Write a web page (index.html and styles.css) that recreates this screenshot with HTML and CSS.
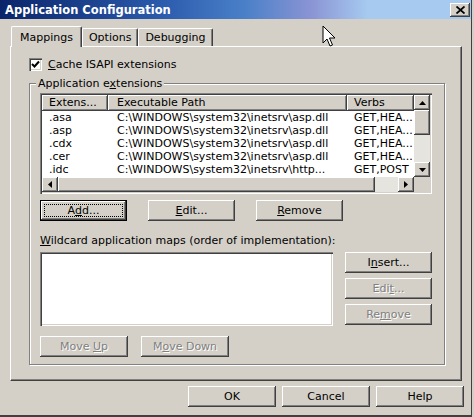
FILE: index.html
```html
<!DOCTYPE html>
<html>
<head>
<meta charset="utf-8">
<title>Application Configuration</title>
<link rel="stylesheet" href="styles.css">
</head>
<body>
<div class="window">
  <div class="titlebar">
    <span class="title">Application Configuration</span>
    <span class="close"><svg width="9" height="8" viewBox="0 0 9 8"><path d="M0.5 0.5 L8.5 7.5 M8.5 0.5 L0.5 7.5" stroke="#000" stroke-width="1.8" fill="none"/></svg></span>
  </div>
  <div class="main">
    <div class="tabs">
      <div class="tab active">Mappings</div>
      <div class="tab">Options</div>
      <div class="tab">Debugging</div>
    </div>
    <div class="panel">
      <div class="check">
        <span class="box"><svg width="9" height="9" viewBox="0 0 9 9"><path d="M1 4 L3.5 6.5 L8 1.5" stroke="#000" stroke-width="2" fill="none"/></svg></span>
        <span><u>C</u>ache ISAPI extensions</span>
      </div>
      <fieldset class="group">
        <legend>Application e<u>x</u>tensions</legend>
        <div class="listview">
          <div class="lv-main">
            <div class="lv-head">
              <div class="hc c1">Extens...</div>
              <div class="hc c2">Executable Path</div>
              <div class="hc c3">Verbs</div>
            </div>
            <div class="lv-row"><div class="c1">.asa</div><div class="c2">C:\WINDOWS\system32\inetsrv\asp.dll</div><div class="c3">GET,HEA...</div></div>
            <div class="lv-row"><div class="c1">.asp</div><div class="c2">C:\WINDOWS\system32\inetsrv\asp.dll</div><div class="c3">GET,HEA...</div></div>
            <div class="lv-row"><div class="c1">.cdx</div><div class="c2">C:\WINDOWS\system32\inetsrv\asp.dll</div><div class="c3">GET,HEA...</div></div>
            <div class="lv-row"><div class="c1">.cer</div><div class="c2">C:\WINDOWS\system32\inetsrv\asp.dll</div><div class="c3">GET,HEA...</div></div>
            <div class="lv-row"><div class="c1">.idc</div><div class="c2">C:\WINDOWS\system32\inetsrv\http...</div><div class="c3">GET,POST</div></div>
          </div>
          <div class="vscroll">
            <div class="sbtn"><svg width="7" height="4" viewBox="0 0 7 4"><path d="M3.5 0 L7 4 L0 4 Z" fill="#000"/></svg></div>
            <div class="vthumb"></div>
            <div class="track"></div>
            <div class="sbtn"><svg width="7" height="4" viewBox="0 0 7 4"><path d="M0 0 L7 0 L3.5 4 Z" fill="#000"/></svg></div>
          </div>
          <div class="hscroll">
            <div class="sbtn"><svg width="4" height="7" viewBox="0 0 4 7"><path d="M4 0 L4 7 L0 3.5 Z" fill="#000"/></svg></div>
            <div class="hthumb"></div>
            <div class="track"></div>
            <div class="sbtn"><svg width="4" height="7" viewBox="0 0 4 7"><path d="M0 0 L4 3.5 L0 7 Z" fill="#000"/></svg></div>
          </div>
          <div class="corner"></div>
        </div>
        <div class="btnrow">
          <button class="btn default"><span>A<u>d</u>d...</span></button>
          <button class="btn"><span><u>E</u>dit...</span></button>
          <button class="btn"><span><u>R</u>emove</span></button>
        </div>
        <div class="label"><u>W</u>ildcard application maps (order of implementation):</div>
        <div class="wild">
          <div class="listbox"></div>
          <div class="col">
            <button class="btn"><span>I<u>n</u>sert...</span></button>
            <button class="btn dis"><span>Edi<u>t</u>...</span></button>
            <button class="btn dis"><span>Re<u>m</u>ove</span></button>
          </div>
        </div>
        <div class="moverow">
          <button class="btn dis wide"><span>Move <u>U</u>p</span></button>
          <button class="btn dis wide"><span>M<u>o</u>ve Down</span></button>
        </div>
      </fieldset>
    </div>
  </div>
  <div class="footer">
    <button class="btn wide">OK</button>
    <button class="btn wide">Cancel</button>
    <button class="btn wide">Help</button>
  </div>
  <svg class="cursor" width="14" height="22" viewBox="0 0 14 22"><path d="M1 1 L1 18 L5 14 L8 21 L10.5 20 L7.5 13 L13 13 Z" fill="#fff" stroke="#000" stroke-width="1" stroke-linejoin="miter"/></svg>
</div>
</body>
</html>
```

FILE: styles.css
```css
html, body {
  margin: 0;
  padding: 0;
  background: #d4d0c8;
}
body {
  font: 11px "DejaVu Sans", "Liberation Sans", sans-serif;
  color: #000;
}
.window {
  position: relative;
  width: 472px;
  height: 417px;
  box-sizing: border-box;
  border-right: 1px solid #404040;
  border-bottom: 2px solid #404040;
  background: #d4d0c8;
  overflow: hidden;
}
.titlebar {
  height: 19px;
  display: flex;
  align-items: center;
  justify-content: space-between;
  padding: 0 1px 0 5px;
  background: linear-gradient(to right, #0a246a 0%, #2c5cae 35%, #4a80c8 52%, #8a94d4 66%, #a6caf0 78%, #a6caf0 100%);
  color: #fff;
  font-weight: bold;
  font-size: 11.5px;
}
.close {
  width: 20px;
  height: 14px;
  box-sizing: border-box;
  display: flex;
  align-items: center;
  justify-content: center;
  background: #d4d0c8;
  box-shadow: inset -1px -1px #404040, inset 1px 1px #fff, inset -2px -2px #808080;
}
.main {
  padding: 7px 9px 0 10px;
}
.tabs {
  display: flex;
  align-items: flex-end;
  height: 20px;
  padding-left: 1px;
  position: relative;
  z-index: 1;
}
.tab {
  height: 18px;
  box-sizing: border-box;
  padding: 0 6px;
  line-height: 18px;
  border-top: 1px solid #fff;
  border-left: 1px solid #fff;
  border-right: 1px solid #404040;
  box-shadow: inset -1px 0 #808080;
  border-radius: 2px 2px 0 0;
  background: #d4d0c8;
}
.tab.active {
  height: 21px;
  margin-bottom: -1px;
  padding: 0 8px;
  line-height: 21px;
}
.panel {
  height: 335px;
  box-sizing: border-box;
  border: 1px solid;
  border-color: #fff #404040 #404040 #fff;
  box-shadow: inset -1px -1px #808080;
  padding: 11px 0 0 18px;
}
.check {
  display: flex;
  align-items: center;
  gap: 6px;
  height: 13px;
  line-height: 13px;
}
.box {
  width: 13px;
  height: 13px;
  box-sizing: border-box;
  background: #fff;
  display: flex;
  align-items: center;
  justify-content: center;
  box-shadow: inset 1px 1px #808080, inset 2px 2px #404040, inset -1px -1px #fff, inset -2px -2px #d4d0c8;
}
.group {
  margin: 6px 0 0 0;
  width: 416px;
  box-sizing: border-box;
  min-width: 0;
  padding: 3px 12px 7px 10px;
  border: 1px solid #808080;
  box-shadow: inset 1px 1px #fff, 1px 1px #fff;
}
.group legend {
  padding: 0 2px;
  margin-left: -4px;
  line-height: 13px;
  background: #d4d0c8;
}
.listview {
  height: 101px;
  box-sizing: border-box;
  padding: 2px;
  background: #fff;
  box-shadow: inset 1px 1px #808080, inset 2px 2px #404040, inset -1px -1px #fff, inset -2px -2px #d4d0c8;
  display: grid;
  grid-template-columns: 1fr 16px;
  grid-template-rows: 1fr 15px;
}
.lv-main {
  overflow: hidden;
}
.lv-head, .lv-row {
  display: grid;
  grid-template-columns: 66px 239px 67px;
  white-space: nowrap;
}
.lv-head {
  height: 16px;
}
.hc {
  background: #d4d0c8;
  line-height: 16px;
  box-shadow: inset -1px -1px #404040, inset 1px 1px #fff, inset -2px -2px #808080;
}
.lv-row {
  height: 13px;
  line-height: 13px;
}
.lv-row div, .hc {
  overflow: hidden;
}
.c1 { padding-left: 7px; }
.c2 { padding-left: 9px; }
.c3 { padding-left: 7px; }
.vscroll {
  display: grid;
  grid-template-rows: 15px 25px 1fr 15px;
}
.hscroll {
  display: grid;
  grid-template-columns: 16px 317px 1fr 16px;
}
.sbtn, .vthumb, .hthumb {
  background: #d4d0c8;
  box-shadow: inset -1px -1px #404040, inset 1px 1px #fff, inset -2px -2px #808080;
  display: flex;
  align-items: center;
  justify-content: center;
}
.track {
  background: #e6e4df;
}
.corner {
  background: #d4d0c8;
}
.btn {
  width: 87px;
  height: 21px;
  padding: 0;
  margin: 0;
  border: none;
  background: #d4d0c8;
  font: inherit;
  color: #000;
  box-shadow: inset -1px -1px #404040, inset 1px 1px #fff, inset -2px -2px #808080;
  display: flex;
  align-items: center;
  justify-content: center;
}
.btn.wide {
  width: 88px;
}
.btn.default {
  box-shadow: inset 0 0 0 1px #000, inset -2px -2px #404040, inset 2px 2px #fff, inset -3px -3px #808080;
  outline: 1px dotted #000;
  outline-offset: -5px;
}
.btn.dis {
  color: #808080;
  text-shadow: 1px 1px #fff;
}
.btnrow {
  display: flex;
  gap: 21px;
  margin-top: 6px;
}
.label {
  margin-top: 13px;
  line-height: 13px;
  white-space: nowrap;
}
.wild {
  display: flex;
  gap: 12px;
  margin-top: 5px;
}
.listbox {
  width: 295px;
  height: 74px;
  box-sizing: border-box;
  background: #fff;
  box-shadow: inset 1px 1px #808080, inset 2px 2px #404040, inset -1px -1px #fff, inset -2px -2px #d4d0c8;
}
.col {
  display: flex;
  flex-direction: column;
  gap: 5px;
}
.moverow {
  display: flex;
  gap: 13px;
  margin-top: 10px;
}
.footer {
  display: flex;
  justify-content: flex-end;
  gap: 6px;
  padding: 5px 7px 0 0;
}
.cursor {
  position: absolute;
  left: 322px;
  top: 25px;
}
```
